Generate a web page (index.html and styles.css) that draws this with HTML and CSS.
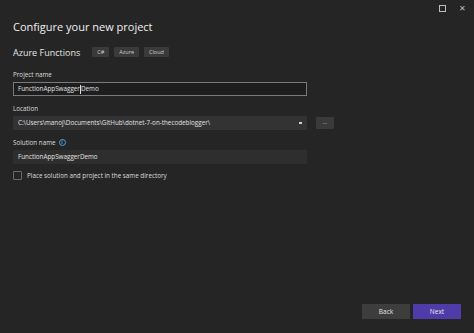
FILE: index.html
```html
<!DOCTYPE html>
<html lang="en">

<head>
    <meta charset="UTF-8">
    <title>Configure your new project</title>
    <link rel="stylesheet" href="styles.css">
</head>

<body>
    <div class="window">
        <div class="titlebar">
            <span class="winBtn max"></span>
            <span class="winBtn close">&#x2715;</span>
        </div>

        <div class="content">
            <h1 class="title">Configure your new project</h1>

            <div class="template">
                <span class="templateName">Azure Functions</span>
                <span class="tag">C#</span>
                <span class="tag">Azure</span>
                <span class="tag">Cloud</span>
            </div>

            <div class="field">
                <label class="label">Project name</label>
                <div class="input focused">FunctionAppSwagger<span class="caret"></span>Demo</div>
            </div>

            <div class="field">
                <label class="label">Location</label>
                <div class="row">
                    <div class="input select">
                        <span>C:\Users\manoj\Documents\GitHub\dotnet-7-on-thecodeblogger\</span>
                        <span class="arrow"></span>
                    </div>
                    <div class="browse">...</div>
                </div>
            </div>

            <div class="field">
                <label class="label">Solution name <span class="info">i</span></label>
                <div class="input plain">FunctionAppSwaggerDemo</div>
            </div>

            <div class="check">
                <span class="box"></span>
                <span>Place solution and project in the same directory</span>
            </div>
        </div>

        <div class="footer">
            <div class="btn back">Back</div>
            <div class="btn next">Next</div>
        </div>
    </div>
</body>

</html>
```

FILE: styles.css
```css
* {
    margin: 0;
    padding: 0;
    box-sizing: border-box;
}

body {
    background-color: #252525;
    color: #e6e6e6;
    font-family: "Open Sans", "Noto Sans", sans-serif;
}

.window {
    width: 474px;
    height: 333px;
    display: flex;
    flex-direction: column;
}

.titlebar {
    height: 14px;
    display: flex;
    justify-content: flex-end;
    align-items: center;
    gap: 12px;
    padding: 2px 8px 0 0;
}

.winBtn {
    width: 8px;
    height: 8px;
    color: #bdbdbd;
    font-size: 8px;
    line-height: 8px;
    text-align: center;
}

.max {
    border: 1px solid #bdbdbd;
    width: 7px;
    height: 7px;
}

.content {
    flex: 1;
    padding: 3px 0 0 13px;
}

.title {
    font-weight: 400;
    font-size: 11px;
    line-height: 20px;
    color: #f0f0f0;
}

.template {
    display: flex;
    align-items: center;
    margin-top: 9px;
    height: 12px;
}

.templateName {
    font-size: 9px;
    margin-right: 12px;
}

.tag {
    background-color: #3a3a3a;
    color: #d0d0d0;
    font-size: 5.5px;
    height: 10px;
    line-height: 10px;
    padding: 0 5px;
    margin-right: 5px;
    border-radius: 1px;
}

.field {
    margin-top: 8px;
}

.template + .field {
    margin-top: 12px;
}

.label {
    display: flex;
    align-items: center;
    gap: 3px;
    font-size: 6.3px;
    height: 9px;
    color: #dcdcdc;
}

.info {
    width: 7px;
    height: 7px;
    border: 1px solid #4ea0e6;
    border-radius: 50%;
    color: #4ea0e6;
    font-size: 5px;
    line-height: 5px;
    text-align: center;
    font-weight: 700;
}

.input {
    margin-top: 3px;
    width: 294px;
    height: 14px;
    font-size: 6.3px;
    line-height: 12px;
    padding: 0 4px;
    color: #e0e0e0;
    border: 1px solid #3c3c3c;
}

.focused {
    background-color: #1e1e1e;
    border-color: #7a7a7a;
}

.caret {
    display: inline-block;
    width: 1px;
    height: 9px;
    background-color: #e0e0e0;
    vertical-align: middle;
}

.row {
    display: flex;
    align-items: center;
    gap: 9px;
}

.select {
    background-color: #333333;
    border-color: #333333;
    display: flex;
    justify-content: space-between;
    align-items: center;
}

.arrow {
    width: 3px;
    height: 2px;
    background-color: #cfcfcf;
}

.browse {
    margin-top: 3px;
    width: 18px;
    height: 12px;
    background-color: #3a3a3a;
    color: #cfcfcf;
    font-size: 6px;
    line-height: 10px;
    text-align: center;
}

.plain {
    background-color: #2e2e2e;
    border-color: #2e2e2e;
}

.check {
    display: flex;
    align-items: center;
    gap: 5px;
    margin-top: 7px;
    font-size: 6.3px;
    color: #dcdcdc;
}

.box {
    width: 9px;
    height: 9px;
    border: 1px solid #6a6a6a;
    border-radius: 1px;
}

.footer {
    display: flex;
    justify-content: flex-end;
    gap: 3px;
    padding: 0 13px 14px 0;
}

.btn {
    width: 48px;
    height: 15px;
    font-size: 6.5px;
    line-height: 15px;
    text-align: center;
    color: #e6e6e6;
}

.back {
    background-color: #3d3d3d;
}

.next {
    background-color: #4f3ca8;
}
```
